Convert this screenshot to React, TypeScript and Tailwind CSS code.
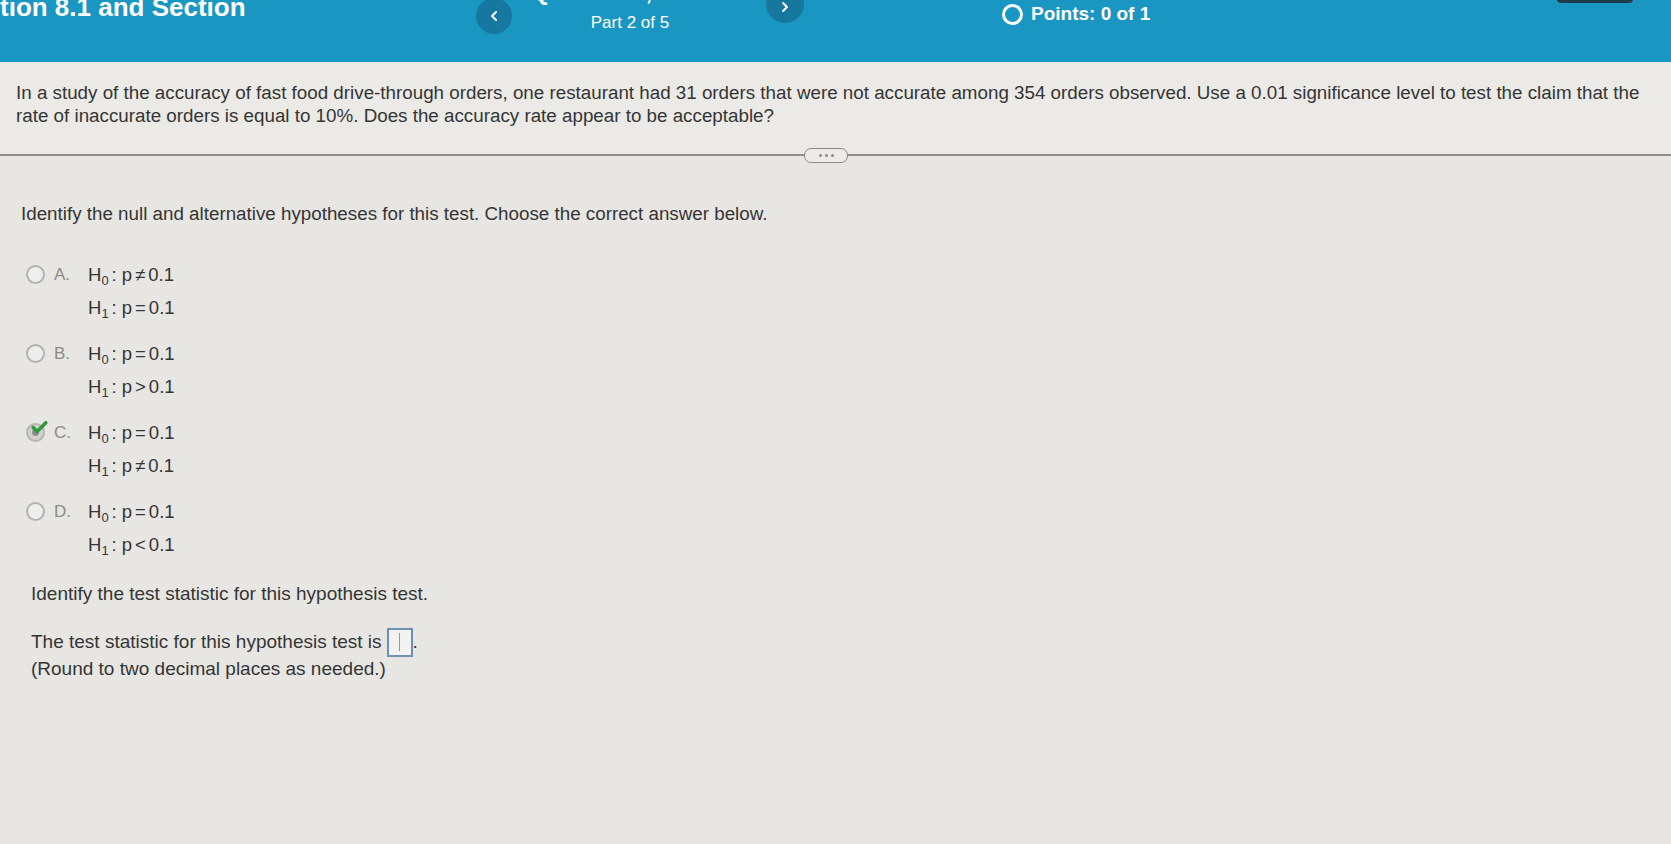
import { ChevronLeft, ChevronRight, Check } from 'lucide-react';

type Option = {
  letter: string;
  h0: string;
  h1: string;
  selected?: boolean;
};

const options: Option[] = [
  { letter: 'A.', h0: '≠', h1: '=' },
  { letter: 'B.', h0: '=', h1: '>' },
  { letter: 'C.', h0: '=', h1: '≠', selected: true },
  { letter: 'D.', h0: '=', h1: '<' },
];

function Hyp({ sub, op }: { sub: string; op: string }) {
  return (
    <div className="flex items-baseline h-[33px] leading-[33px] text-[18.5px] whitespace-nowrap">
      <span>H</span>
      <span className="text-[13px] relative top-[4px]">{sub}</span>
      <span className="ml-[3px] mr-[5px]">:</span>
      <span>p</span>
      <span className="mx-[3px]">{op}</span>
      <span>0.1</span>
    </div>
  );
}

function Radio({ selected }: { selected?: boolean }) {
  if (selected) {
    return (
      <div className="relative w-[19px] h-[19px] mt-[7px]">
        <div className="w-[19px] h-[19px] rounded-full border-[2px] border-[#b5b5b5] bg-[#d2d2d2] flex items-center justify-center">
          <div className="w-[7px] h-[7px] rounded-full bg-[#8e8e8e]" />
        </div>
        <Check className="absolute -top-[5px] left-[4px] w-[19px] h-[19px] text-[#2f9a3b]" strokeWidth={4.5} />
      </div>
    );
  }
  return <div className="w-[19px] h-[19px] mt-[7px] rounded-full border-[2px] border-[#b3b3b3] bg-[#eeeeec]" />;
}

export default function App() {
  return (
    <div className="min-h-screen w-full overflow-hidden bg-[#e7e6e3] text-[#353535] font-['Liberation_Sans',Arial,sans-serif]">
      {/* top bar */}
      <header className="h-[62px] bg-[#1a96c3] flex items-start overflow-hidden">
        <div className="w-[476px] shrink-0">
          <div className="-mt-[9px] text-[26px] font-bold leading-[32px] text-white whitespace-nowrap">
            tion 8.1 and Section
          </div>
        </div>
        <button className="w-[36px] h-[36px] shrink-0 -mt-[2px] rounded-full bg-[#17789f] flex items-center justify-center text-white">
          <ChevronLeft className="w-[16px] h-[16px]" strokeWidth={3} />
        </button>
        <div className="w-[236px] shrink-0 flex flex-col items-center text-white">
          <div className="-mt-[20px] text-[22px] font-bold leading-[26px] whitespace-nowrap">Question 4, 8.2.9-T</div>
          <div className="mt-[7px] text-[17px] leading-[20px] whitespace-nowrap">Part 2 of 5</div>
        </div>
        <button className="ml-[18px] w-[38px] h-[38px] shrink-0 -mt-[15px] rounded-full bg-[#17789f] flex items-center justify-center text-white">
          <ChevronRight className="w-[16px] h-[16px] mt-[6px]" strokeWidth={3} />
        </button>
        <div className="ml-[198px] mt-[3px] flex items-center gap-[8px] text-white">
          <div className="w-[21px] h-[21px] rounded-full border-[3px] border-white" />
          <span className="text-[19px] font-bold leading-[22px] whitespace-nowrap">Points: 0 of 1</span>
        </div>
        <div className="ml-auto mr-[38px] -mt-[6px] w-[76px] h-[9px] rounded-[4px] bg-[#1f3a4a]" />
      </header>

      {/* problem statement */}
      <section className="bg-[#ebeae7] px-[16px] pt-[19px] pb-[28px]">
        <p className="text-[18.8px] leading-[23px] whitespace-nowrap">
          In a study of the accuracy of fast food drive-through orders, one restaurant had 31 orders that were not accurate among 354 orders observed. Use a 0.01 significance level to test the claim that the
          <br />
          rate of inaccurate orders is equal to 10%. Does the accuracy rate appear to be acceptable?
        </p>
      </section>

      <div className="flex items-center h-[16px] -mt-[8px]">
        <div className="w-[804px] h-[1.5px] bg-[#8d8d8d]" />
        <div className="w-[44px] h-[15px] rounded-[7px] border-[1.5px] border-[#8a8a8a] bg-[#ecebe8] flex items-center justify-center gap-[3px]">
          <span className="w-[3px] h-[3px] rounded-full bg-[#8a8a8a]" />
          <span className="w-[3px] h-[3px] rounded-full bg-[#8a8a8a]" />
          <span className="w-[3px] h-[3px] rounded-full bg-[#8a8a8a]" />
        </div>
        <div className="flex-1 h-[1.5px] bg-[#8d8d8d]" />
      </div>

      <main className="px-[21px] pt-[39px]">
        <p className="text-[18.8px] leading-[24px] whitespace-nowrap">
          Identify the null and alternative hypotheses for this test. Choose the correct answer below.
        </p>

        <div className="mt-[32px] flex flex-col gap-[13px] pl-[5px]">
          {options.map((o) => (
            <div key={o.letter} className="flex items-start">
              <Radio selected={o.selected} />
              <span className="ml-[9px] w-[34px] leading-[33px] text-[17px] text-[#8b8b8b]">{o.letter}</span>
              <div className="flex flex-col">
                <Hyp sub="0" op={o.h0} />
                <Hyp sub="1" op={o.h1} />
              </div>
            </div>
          ))}
        </div>

        <div className="pl-[10px] mt-[21px]">
          <p className="text-[19px] leading-[24px] whitespace-nowrap">Identify the test statistic for this hypothesis test.</p>
          <div className="mt-[21px] h-[30px] flex items-center text-[19px] leading-[24px] whitespace-nowrap">
            <span>The test statistic for this hypothesis test is</span>
            <span className="ml-[5px] w-[26px] h-[29px] border-[2px] border-[#6f90b5] bg-[#f2f2f0] flex items-center justify-center">
              <span className="w-[1px] h-[18px] bg-[#9a9a9a]" />
            </span>
            <span>.</span>
          </div>
          <p className="text-[19px] leading-[24px] whitespace-nowrap">(Round to two decimal places as needed.)</p>
        </div>
      </main>
    </div>
  );
}
